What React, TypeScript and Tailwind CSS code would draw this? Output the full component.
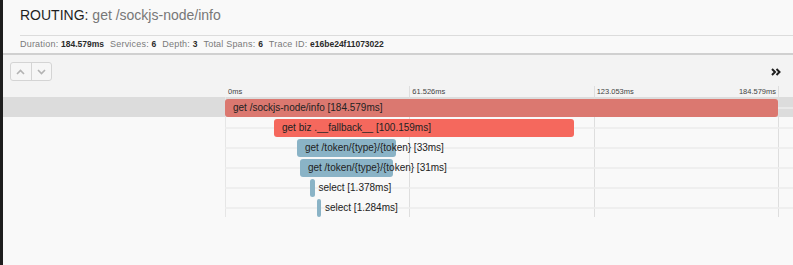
import React from 'react';

interface Span {
  name: string;
  start: number;
  duration: number;
  label: string;
  color: string;
}

const TOTAL = 184.579;

const spans: Span[] = [
  { name: 'get /sockjs-node/info', start: 0, duration: 184.579, label: '184.579ms', color: 'bg-[#db7870]' },
  { name: 'get biz .__fallback__', start: 16.35, duration: 100.159, label: '100.159ms', color: 'bg-[#f5685d]' },
  { name: 'get /token/{type}/{token}', start: 24.0, duration: 33, label: '33ms', color: 'bg-[#8ab3c6]' },
  { name: 'get /token/{type}/{token}', start: 25.0, duration: 31, label: '31ms', color: 'bg-[#8ab3c6]' },
  { name: 'select', start: 28.5, duration: 1.378, label: '1.378ms', color: 'bg-[#8ab3c6]' },
  { name: 'select', start: 30.7, duration: 1.284, label: '1.284ms', color: 'bg-[#8ab3c6]' },
];

const ChevronUp = () => (
  <svg width="9" height="6" viewBox="0 0 9 6" fill="none">
    <path d="M1 5L4.5 1.5L8 5" stroke="#b3b3b3" strokeWidth="1.6" />
  </svg>
);

const ChevronDown = () => (
  <svg width="9" height="6" viewBox="0 0 9 6" fill="none">
    <path d="M1 1L4.5 4.5L8 1" stroke="#b3b3b3" strokeWidth="1.6" />
  </svg>
);

const DoubleChevron = () => (
  <svg width="10" height="8" viewBox="0 0 10 8" fill="none">
    <path d="M1 1L4 4L1 7M5.5 1L8.5 4L5.5 7" stroke="#1f1f1f" strokeWidth="2" />
  </svg>
);

const Meta = ({ label, value }: { label: string; value: string }) => (
  <span className="mr-[6px]">
    <span className="text-[#7a7a7a] tracking-[0.2px]">{label}: </span>
    <span className="text-[8.5px] font-bold text-[#2a2a2a]">{value}</span>
  </span>
);

// vertical grid lines shared by the tick row and the span rows
const GridLines = ({ first }: { first: boolean }) => (
  <>
    {first && <div className="absolute top-0 bottom-0 left-0 w-px bg-[#e6e6e6]" />}
    <div className="absolute top-0 bottom-0 left-1/3 w-px bg-[#dedede]" />
    <div className="absolute top-0 bottom-0 left-2/3 w-px bg-[#dedede]" />
    <div className="absolute top-0 bottom-0 left-full w-px bg-[#dedede]" />
  </>
);

const SpanRow = ({ span, selected }: { span: Span; selected: boolean }) => (
  <div className={`flex h-[20px] ${selected ? 'bg-[#dcdcdc]' : ''}`}>
    <div className="w-[222px] shrink-0" />
    <div className="relative flex-1">
      <div className="absolute left-0 right-0 top-[10px] h-[2px] bg-[#ececec] opacity-80" />
      <div className="relative mr-[15px] h-full">
        <div
          className={`relative mt-[2px] h-[18px] rounded-[3px] ${span.color}`}
          style={{
            marginLeft: `${(span.start / TOTAL) * 100}%`,
            width: `${(span.duration / TOTAL) * 100}%`,
          }}
        >
          <span className="absolute left-[8px] top-0 whitespace-nowrap text-[10px] leading-[18px] text-[#222]">
            {span.name} [{span.label}]
          </span>
        </div>
      </div>
    </div>
  </div>
);

const App: React.FC = () => {
  return (
    <div className="flex h-[265px] w-[793px] overflow-hidden font-['Liberation_Sans',Arial,sans-serif]">
      <div className="w-[3px] shrink-0 bg-[#1e1e1e]" />
      <div className="flex flex-1 flex-col bg-[#f9f9f9]">
        <div className="border-b-2 border-[#d0d0d0] pl-[17px]">
          <h1 className="h-[36px] border-b border-[#dcdcdc] pt-[7px] text-[14px] leading-[17px]">
            <span className="text-[#1f1f1f]">ROUTING:</span>
            <span className="text-[#777]"> get /sockjs-node/info</span>
          </h1>
          <div className="flex h-[17px] items-center whitespace-nowrap text-[9px]">
            <Meta label="Duration" value="184.579ms" />
            <Meta label="Services" value="6" />
            <Meta label="Depth" value="3" />
            <Meta label="Total Spans" value="6" />
            <Meta label="Trace ID" value="e16be24f11073022" />
          </div>
        </div>

        <div className="flex h-[31px] items-start justify-between bg-[#f3f3f3] pl-[7px] pr-[12px] pt-[7px]">
          <div className="flex h-[19px] w-[42px] rounded-[3px] border border-[#d4d4d4] bg-[#f6f6f6]">
            <button className="flex flex-1 items-center justify-center border-r border-[#d4d4d4]">
              <ChevronUp />
            </button>
            <button className="flex flex-1 items-center justify-center">
              <ChevronDown />
            </button>
          </div>
          <div className="mt-[6px]">
            <DoubleChevron />
          </div>
        </div>

        <div className="flex h-[11px] bg-[#f3f3f3] text-[7.5px] leading-[11px] text-[#444]">
          <div className="w-[222px] shrink-0" />
          <div className="flex-1">
            <div className="relative mr-[15px] flex h-full">
              <GridLines first={false} />
              <div className="flex-1 pl-[3px]">0ms</div>
              <div className="flex-1 pl-[3px]">61.526ms</div>
              <div className="flex-1 pl-[3px]">123.053ms</div>
              <div className="absolute right-[2px] top-0">184.579ms</div>
            </div>
          </div>
        </div>

        <div className="relative">
          <div className="pointer-events-none absolute bottom-0 left-[222px] right-[15px] top-0">
            <GridLines first />
          </div>
          {spans.map((span, i) => (
            <SpanRow key={i} span={span} selected={i === 0} />
          ))}
        </div>
      </div>
    </div>
  );
};

export default App;
